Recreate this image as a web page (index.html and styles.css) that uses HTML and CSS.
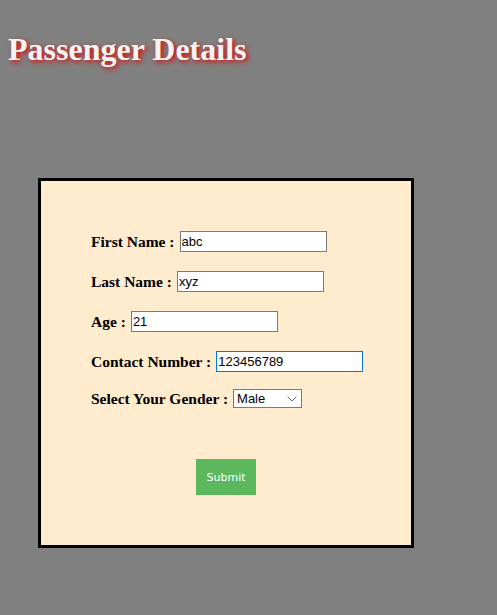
FILE: index.html
```html
<!DOCTYPE html>
<html>
<head>
<meta charset="utf-8">
<title>Passenger Details</title>
<link rel="stylesheet" href="styles.css">
</head>
<body>
<h1 class="title">Passenger Details</h1>
<form class="card">
  <div class="row r1"><label class="lbl">First Name :</label><input class="field" type="text" value="abc"></div>
  <div class="row r2"><label class="lbl">Last Name :</label><input class="field" type="text" value="xyz"></div>
  <div class="row r3"><label class="lbl">Age :</label><input class="field" type="text" value="21"></div>
  <div class="row r4"><label class="lbl">Contact Number :</label><input class="field active" id="contact" type="text" value="123456789"></div>
  <div class="row r5"><label class="lbl">Select Your Gender :</label>
    <select class="pick"><option>Male</option><option>Female</option></select>
  </div>
  <button class="submit" type="button">Submit</button>
</form>
<script src="app.js"></script>
</body>
</html>
```
FILE: styles.css
```css
html, body {
  margin: 0;
  padding: 0;
}
body {
  background: #808080;
  font-family: "Liberation Serif", "Times New Roman", serif;
  width: 497px;
  height: 615px;
  overflow: hidden;
}
.title {
  margin: 31px 0 0 8px;
  font-size: 32px;
  line-height: 37px;
  font-weight: bold;
  color: #f4f4f4;
  text-shadow: 2px 2px 5px #e00000;
}
.card {
  box-sizing: border-box;
  margin: 110px 0 0 38px;
  width: 376px;
  height: 370px;
  border: 3px solid #000;
  background: #ffebcd;
  padding: 50px 0 0 50px;
  display: flex;
  flex-direction: column;
  align-items: flex-start;
}
.row {
  display: flex;
  align-items: center;
  gap: 5px;
  height: 21px;
}
.r1, .r2, .r3 { margin-bottom: 19px; }
.r4 { margin-bottom: 17px; }
.r5 { height: 19px; margin-bottom: 51px; }
.lbl {
  font-size: 15.5px;
  font-weight: bold;
  color: #000;
  white-space: nowrap;
}
.field {
  box-sizing: border-box;
  width: 147px;
  height: 21px;
  margin: 0;
  padding: 0 1px;
  border: 1px solid #7a7a7a;
  background: #fff;
  font-family: "Liberation Sans", Arial, sans-serif;
  font-size: 13px;
  color: #000;
  outline: none;
}
.field.active,
.field.active:focus {
  border: 1px solid #0078d7;
}
.pick {
  box-sizing: border-box;
  width: 69px;
  height: 19px;
  margin: 0;
  padding: 0 0 0 3px;
  border: 1px solid #7a7a7a;
  border-radius: 0;
  background-color: #fff;
  background-image: url("data:image/svg+xml,%3Csvg xmlns='http://www.w3.org/2000/svg' width='10' height='6'%3E%3Cpath d='M0.5 0.5 L5 5 L9.5 0.5' fill='none' stroke='%23707070' stroke-width='1'/%3E%3C/svg%3E");
  background-repeat: no-repeat;
  background-position: right 4px center;
  -webkit-appearance: none;
  appearance: none;
  font-family: "Liberation Sans", Arial, sans-serif;
  font-size: 13px;
  color: #000;
}
.submit {
  margin: 0 0 0 105px;
  width: 60px;
  height: 36px;
  padding: 0;
  border: none;
  background: #5cb85c;
  color: #fff;
  font-family: "DejaVu Sans", Verdana, sans-serif;
  font-size: 11px;
}
```
FILE: app.js
```js
var c = document.getElementById('contact');
c.focus();
c.setSelectionRange(c.value.length, c.value.length);
```
